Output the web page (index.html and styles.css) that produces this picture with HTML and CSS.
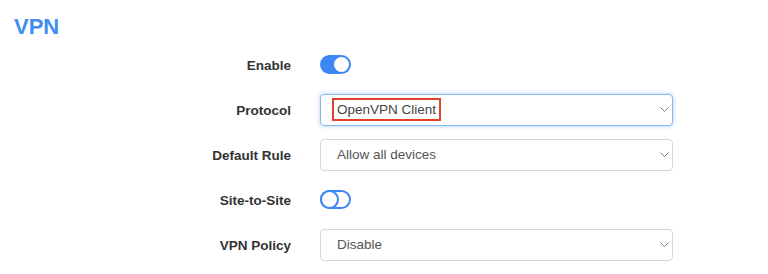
FILE: index.html
```html
<!DOCTYPE html>
<html lang="en">
<head>
<meta charset="utf-8">
<title>VPN</title>
<link rel="stylesheet" href="styles.css">
</head>
<body>
<div class="page">
  <h1 class="title">VPN</h1>
  <div class="form">
    <div class="row">
      <div class="label">Enable</div>
      <div class="control"><span class="toggle on"><span class="knob"></span></span></div>
    </div>
    <div class="row">
      <div class="label">Protocol</div>
      <div class="control">
        <div class="select focused">
          <span class="value marked">OpenVPN Client</span>
          <svg class="chev" width="9" height="5" viewBox="0 0 9 5"><path d="M0.5 0.5 L4.5 4.5 L8.5 0.5" fill="none" stroke="#808080" stroke-width="1"/></svg>
        </div>
      </div>
    </div>
    <div class="row">
      <div class="label">Default Rule</div>
      <div class="control">
        <div class="select">
          <span class="value">Allow all devices</span>
          <svg class="chev" width="9" height="5" viewBox="0 0 9 5"><path d="M0.5 0.5 L4.5 4.5 L8.5 0.5" fill="none" stroke="#808080" stroke-width="1"/></svg>
        </div>
      </div>
    </div>
    <div class="row">
      <div class="label">Site-to-Site</div>
      <div class="control"><span class="toggle off"><span class="knob"></span></span></div>
    </div>
    <div class="row">
      <div class="label">VPN Policy</div>
      <div class="control">
        <div class="select">
          <span class="value">Disable</span>
          <svg class="chev" width="9" height="5" viewBox="0 0 9 5"><path d="M0.5 0.5 L4.5 4.5 L8.5 0.5" fill="none" stroke="#808080" stroke-width="1"/></svg>
        </div>
      </div>
    </div>
  </div>
</div>
</body>
</html>
```

FILE: styles.css
```css
html, body {
  margin: 0;
  padding: 0;
  background: #ffffff;
}
body {
  font-family: "Liberation Sans", Arial, sans-serif;
  color: #333;
}
.page {
  padding: 14px 0 0 14px;
}
.title {
  margin: 0;
  font-size: 22px;
  line-height: 26px;
  font-weight: 700;
  color: #3f8ef2;
}
.form {
  margin-top: 2px;
  display: flex;
  flex-direction: column;
}
.row {
  display: grid;
  grid-template-columns: 277px 353px;
  column-gap: 29px;
  height: 45px;
  align-items: center;
}
.label {
  text-align: right;
  font-size: 13.5px;
  font-weight: 700;
  color: #333;
  padding-top: 2px;
}
.control {
  display: flex;
  align-items: center;
}
.toggle {
  position: relative;
  display: inline-block;
  box-sizing: border-box;
  width: 31px;
  height: 19px;
  border-radius: 10px;
}
.toggle.on {
  background: #3d87f5;
}
.toggle.on .knob {
  position: absolute;
  right: 2px;
  top: 2px;
  width: 15px;
  height: 15px;
  border-radius: 50%;
  background: #fff;
}
.toggle.off {
  background: #fff;
  border: 2px solid #3d87f5;
}
.toggle.off .knob {
  position: absolute;
  left: -2px;
  top: -2px;
  box-sizing: border-box;
  width: 19px;
  height: 19px;
  border-radius: 50%;
  border: 2px solid #3d87f5;
  background: #fff;
}
.select {
  box-sizing: border-box;
  width: 353px;
  height: 32px;
  border: 1px solid #d6d6d6;
  border-radius: 4px;
  display: flex;
  align-items: center;
  justify-content: space-between;
  padding: 0 3px 0 11px;
  background: #fff;
}
.select.focused {
  border-color: #8ab6ee;
  box-shadow: 0 0 4px rgba(70, 140, 240, 0.45);
}
.value {
  font-size: 13.5px;
  color: #555;
  border: 2px solid transparent;
  padding: 2px 3px;
  line-height: 15px;
}
.value.marked {
  border-color: #e2412c;
  color: #444;
}
.chev {
  display: block;
}
```
